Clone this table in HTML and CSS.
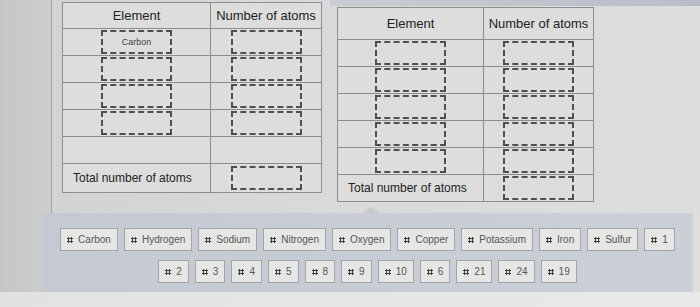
FILE: index.html
```html
<!DOCTYPE html>
<html>
<head>
<meta charset="utf-8">
<link rel="stylesheet" href="styles.css">
</head>
<body>
<div class="page">
  <div class="topband"></div>
  <div class="work">
    <table class="tbl tbl-left">
      <tr class="head"><th class="c-el">Element</th><th class="c-num">Number of atoms</th></tr>
      <tr><td><div class="drop filled">Carbon</div></td><td><div class="drop"></div></td></tr>
      <tr><td><div class="drop"></div></td><td><div class="drop"></div></td></tr>
      <tr><td><div class="drop"></div></td><td><div class="drop"></div></td></tr>
      <tr><td><div class="drop"></div></td><td><div class="drop"></div></td></tr>
      <tr><td></td><td></td></tr>
      <tr class="total"><td class="label">Total number of atoms</td><td><div class="drop"></div></td></tr>
    </table>
    <table class="tbl tbl-right">
      <tr class="head"><th class="c-el">Element</th><th class="c-num">Number of atoms</th></tr>
      <tr><td><div class="drop"></div></td><td><div class="drop"></div></td></tr>
      <tr><td><div class="drop"></div></td><td><div class="drop"></div></td></tr>
      <tr><td><div class="drop"></div></td><td><div class="drop"></div></td></tr>
      <tr><td><div class="drop"></div></td><td><div class="drop"></div></td></tr>
      <tr><td><div class="drop"></div></td><td><div class="drop"></div></td></tr>
      <tr class="total"><td class="label">Total number of atoms</td><td><div class="drop"></div></td></tr>
    </table>
  </div>
  <div class="bank">
    <span class="notch"></span>
    <div class="chips">
      <span class="chip"><i class="grip"></i>Carbon</span>
      <span class="chip"><i class="grip"></i>Hydrogen</span>
      <span class="chip"><i class="grip"></i>Sodium</span>
      <span class="chip"><i class="grip"></i>Nitrogen</span>
      <span class="chip"><i class="grip"></i>Oxygen</span>
      <span class="chip"><i class="grip"></i>Copper</span>
      <span class="chip"><i class="grip"></i>Potassium</span>
      <span class="chip"><i class="grip"></i>Iron</span>
      <span class="chip"><i class="grip"></i>Sulfur</span>
      <span class="chip"><i class="grip"></i>1</span>
      <span class="chip"><i class="grip"></i>2</span>
      <span class="chip"><i class="grip"></i>3</span>
      <span class="chip"><i class="grip"></i>4</span>
      <span class="chip"><i class="grip"></i>5</span>
      <span class="chip"><i class="grip"></i>8</span>
      <span class="chip"><i class="grip"></i>9</span>
      <span class="chip"><i class="grip"></i>10</span>
      <span class="chip"><i class="grip"></i>6</span>
      <span class="chip"><i class="grip"></i>21</span>
      <span class="chip"><i class="grip"></i>24</span>
      <span class="chip"><i class="grip"></i>19</span>
    </div>
  </div>
  <div class="foot"></div>
</div>
</body>
</html>
```

FILE: styles.css
```css
* { box-sizing: border-box; }
html, body { margin: 0; padding: 0; }
body {
  width: 700px;
  height: 307px;
  overflow: hidden;
  font-family: "Liberation Sans", Arial, sans-serif;
  background: linear-gradient(90deg, #c4c5c4 0px, #cfd0cf 60px, #d8d9d8 350px, #dedfdd 700px);
}
.page {
  position: relative;
  width: 700px;
  height: 307px;
  display: flex;
  flex-direction: column;
}
.topband {
  position: absolute;
  left: 330px;
  top: 0;
  width: 370px;
  height: 6px;
  background: linear-gradient(90deg, #c9ccd3, #b9bdc8);
}
.work {
  height: 213px;
  margin-left: 51px;
  border-left: 1px solid #a3a4a3;
  padding-left: 10px;
  display: flex;
  align-items: flex-start;
  gap: 15px;
  background: linear-gradient(90deg, #d2d3d2, #d9dad9 300px, #dcdddc 600px);
}
.tbl {
  border-collapse: collapse;
  background: #dcdddc;
  border: 1px solid #8c8d8c;
}
.tbl td, .tbl th {
  border: 1px solid #8c8d8c;
  padding: 0;
  text-align: center;
  vertical-align: middle;
}
.tbl th {
  font-weight: normal;
  font-size: 13px;
  color: #222;
}
.tbl-left { margin-top: 2px; }
.tbl-left .c-el { width: 148px; }
.tbl-left .c-num { width: 111px; }
.tbl-left .head { height: 26px; }
.tbl-left .total td { height: 29px; }
.tbl-right { margin-top: 7px; }
.tbl-right .c-el { width: 146px; }
.tbl-right .c-num { width: 110px; }
.tbl-right .head { height: 32px; }
.tbl-right .total td { height: 27px; }
.tbl td { height: 27px; }
.tbl td.label {
  font-size: 12px;
  color: #222;
  text-align: left;
  padding-left: 10px;
}
.drop {
  width: 71px;
  height: 24px;
  margin: 0 auto;
  border: 2px dashed #4e4f4e;
  font-size: 9px;
  color: #444;
  display: flex;
  align-items: center;
  justify-content: center;
}
.bank {
  position: relative;
  margin-left: 42px;
  width: 651px;
  height: 79px;
  background: linear-gradient(90deg, #c5c9d2, #c8ccd5 50%, #cbcfd8);
  padding: 15px 4px 0;
}
.notch {
  position: absolute;
  left: 320px;
  top: -6px;
  width: 0;
  height: 0;
  border-left: 9px solid transparent;
  border-right: 9px solid transparent;
  border-bottom: 6px solid #c6cad3;
}
.chips {
  display: flex;
  flex-wrap: wrap;
  justify-content: center;
  column-gap: 6px;
  row-gap: 9px;
}
.chip {
  display: inline-flex;
  align-items: center;
  height: 23px;
  padding: 0 6px 0 6px;
  background: #e6e7e5;
  border: 1px solid #a2a4a6;
  font-size: 10px;
  color: #555;
}
.grip {
  display: inline-block;
  width: 6px;
  height: 6px;
  margin-right: 5px;
  background:
    radial-gradient(circle, #3c3c3c 1.1px, transparent 1.3px) 0 0 / 3px 3px;
}
.foot {
  flex: 1;
  background: linear-gradient(90deg, #e2e3e1, #e9eae8);
}
```
